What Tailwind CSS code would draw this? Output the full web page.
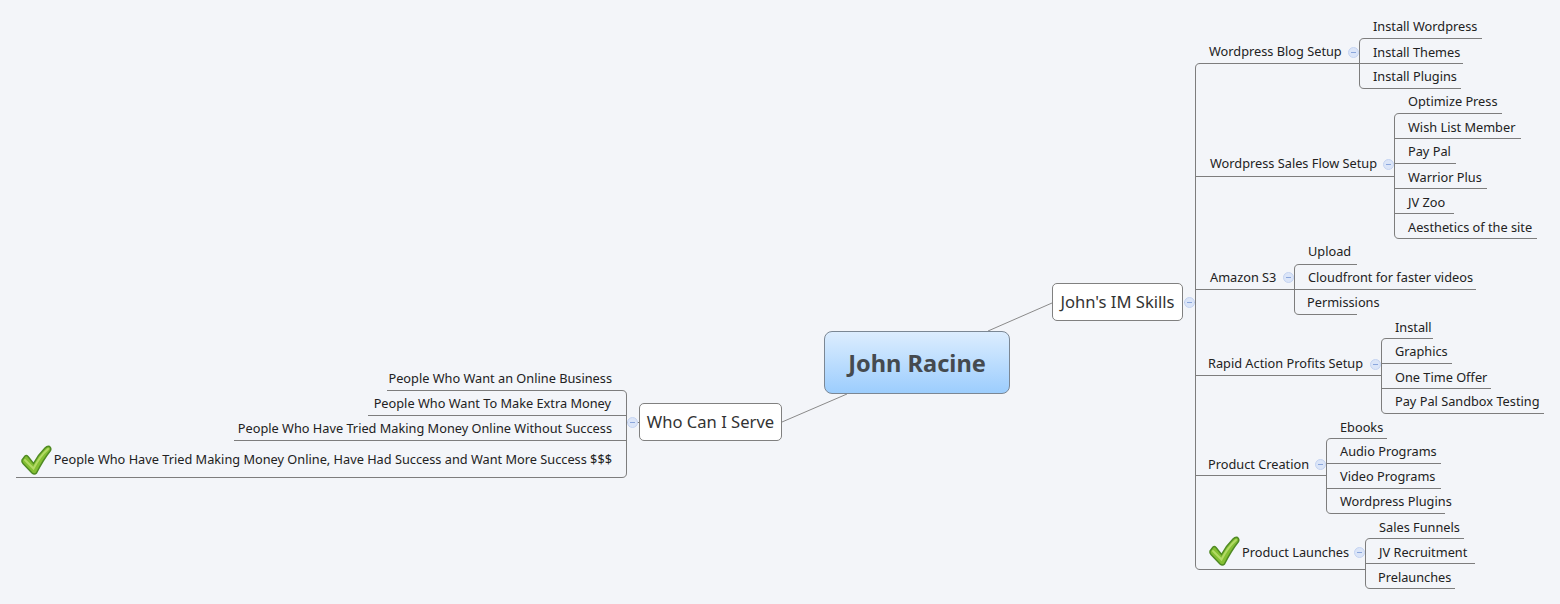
<!DOCTYPE html>
<html lang="en">
<head>
  <meta charset="UTF-8">
  <title>John Racine</title>
  <script src="https://cdn.jsdelivr.net/npm/@tailwindcss/browser@4"></script>
</head>
<body class="bg-[#f3f5f9] overflow-hidden">
  <div class="relative w-[1560px] h-[604px] font-['Noto_Sans',sans-serif] text-[12.75px] leading-5 text-[#222] whitespace-nowrap">

    <!-- connector lines -->
    <svg class="absolute left-0 top-0" width="1560" height="604" fill="none" stroke="#7d7d7d" stroke-width="1">
      <path stroke="#8a8a8a" d="M988 331L1052 303M847 394L782 422"/>
      <path d="M1199 63.5H1360M1195.500 176.5H1394.5M1195.500 289.5H1295M1195.500 375.5H1382M1195.500 475.5H1327M1199 569.5H1366"/>
      <path d="M1200 63.5Q1195.5 63.5 1195.5 68V565Q1195.5 569.5 1200 569.5"/>
      <path d="M1184 302.5H1195"/>
      <!-- blog setup -->
      <path d="M1482 38.5H1364Q1359.5 38.5 1359.5 43V84Q1359.5 88.5 1364 88.5H1461M1360 63.5H1463"/>
      <!-- sales flow -->
      <path d="M1502 113.5H1399Q1394.5 113.5 1394.5 118V234Q1394.5 238.5 1399 238.5H1537M1395 138.5H1521M1395 163.5H1456M1395 188.5H1487M1395 213.5H1454"/>
      <!-- amazon -->
      <path d="M1357 264.5H1299Q1294.5 264.5 1294.5 269V310Q1294.5 314.5 1299 314.5H1357M1295 289.5H1476"/>
      <!-- rapid action -->
      <path d="M1433 338.5H1386Q1381.5 338.5 1381.5 343V409Q1381.5 413.5 1386 413.5H1544M1382 363.5H1452M1382 388.5H1491"/>
      <!-- product creation -->
      <path d="M1387 438.5H1331Q1326.5 438.5 1326.5 443V509Q1326.5 513.5 1331 513.5H1445M1327 463.5H1441M1327 488.5H1441"/>
      <!-- product launches -->
      <path d="M1464 538.5H1370Q1365.5 538.5 1365.5 543V584Q1365.5 588.5 1370 588.5H1455M1366 563.5H1475"/>
      <!-- who can i serve -->
      <path d="M387 390.5H622Q626.5 390.5 626.5 395V473Q626.5 477.5 622 477.5H16M368 415.5H626M234 440.5H626"/>
      <path d="M627 422.5H639"/>
      <!-- collapse markers -->
      <g fill="#dbe5f8" stroke="#c5d4f2">
        <circle cx="1189.5" cy="302.5" r="5"/>
        <circle cx="632.5" cy="422.5" r="5"/>
        <circle cx="1353.5" cy="52.5" r="5"/>
        <circle cx="1388.5" cy="164.5" r="5"/>
        <circle cx="1288.5" cy="277.5" r="5"/>
        <circle cx="1375.5" cy="364.5" r="5"/>
        <circle cx="1320.5" cy="464.5" r="5"/>
        <circle cx="1359.5" cy="552.5" r="5"/>
      </g>
      <path stroke="#8aa6dc" d="M1187 302.5H1192M630 422.5H635M1351 52.5H1356M1386 164.5H1391M1286 277.5H1291M1373 364.5H1378M1318 464.5H1323M1357 552.5H1362"/>
    </svg>

    <!-- central topic -->
    <div class="absolute left-[824px] top-[331px] w-[186px] h-[63px] flex items-center justify-center rounded-[8px] border border-[#7b8794] bg-gradient-to-b from-[#dcedfe] to-[#9ccdfd] text-[23.6px] font-bold text-[#454a4f]">John Racine</div>

    <!-- main branches -->
    <div class="absolute left-[1052px] top-[283px] w-[131px] h-[38px] flex items-center justify-center rounded-[5px] border border-[#808080] bg-white text-[16.6px] text-[#333]">John's IM Skills</div>
    <div class="absolute left-[639px] top-[403px] w-[143px] h-[38px] flex items-center justify-center rounded-[5px] border border-[#808080] bg-white text-[16.6px] text-[#333]">Who Can I Serve</div>

    <!-- right side subtopics -->
    <span class="absolute left-[1209px] top-[41px]">Wordpress Blog Setup</span>
    <span class="absolute left-[1210px] top-[153px]">Wordpress Sales Flow Setup</span>
    <span class="absolute left-[1210px] top-[267px]">Amazon S3</span>
    <span class="absolute left-[1208px] top-[353px]">Rapid Action Profits Setup</span>
    <span class="absolute left-[1208px] top-[454px]">Product Creation</span>
    <span class="absolute left-[1242px] top-[542px]">Product Launches</span>

    <span class="absolute left-[1373px] top-[16px]">Install Wordpress</span>
    <span class="absolute left-[1373px] top-[42px]">Install Themes</span>
    <span class="absolute left-[1373px] top-[66px]">Install Plugins</span>

    <span class="absolute left-[1408px] top-[91px]">Optimize Press</span>
    <span class="absolute left-[1408px] top-[117px]">Wish List Member</span>
    <span class="absolute left-[1408px] top-[141px]">Pay Pal</span>
    <span class="absolute left-[1408px] top-[167px]">Warrior Plus</span>
    <span class="absolute left-[1408px] top-[192px]">JV Zoo</span>
    <span class="absolute left-[1408px] top-[217px]">Aesthetics of the site</span>

    <span class="absolute left-[1308px] top-[241px]">Upload</span>
    <span class="absolute left-[1308px] top-[267px]">Cloudfront for faster videos</span>
    <span class="absolute left-[1307px] top-[292px]">Permissions</span>

    <span class="absolute left-[1395px] top-[317px]">Install</span>
    <span class="absolute left-[1395px] top-[341px]">Graphics</span>
    <span class="absolute left-[1395px] top-[367px]">One Time Offer</span>
    <span class="absolute left-[1395px] top-[391px]">Pay Pal Sandbox Testing</span>

    <span class="absolute left-[1340px] top-[417px]">Ebooks</span>
    <span class="absolute left-[1340px] top-[441px]">Audio Programs</span>
    <span class="absolute left-[1340px] top-[466px]">Video Programs</span>
    <span class="absolute left-[1340px] top-[491px]">Wordpress Plugins</span>

    <span class="absolute left-[1379px] top-[517px]">Sales Funnels</span>
    <span class="absolute left-[1379px] top-[542px]">JV Recruitment</span>
    <span class="absolute left-[1378px] top-[567px]">Prelaunches</span>

    <!-- left side subtopics -->
    <span class="absolute right-[948px] top-[368px]">People Who Want an Online Business</span>
    <span class="absolute right-[949px] top-[393px]">People Who Want To Make Extra Money</span>
    <span class="absolute right-[948px] top-[418px]">People Who Have Tried Making Money Online Without Success</span>
    <span class="absolute right-[948px] top-[449px]">People Who Have Tried Making Money Online, Have Had Success and Want More Success $$$</span>

    <!-- check marks -->
    <svg class="absolute left-[20px] top-[444px]" width="33" height="33" viewBox="0 0 33 33">
      <path d="M2 16Q1.500 18 3 19.500L12 29Q14.500 31 16.500 29Q23 16 30.500 6.500Q31.500 4 29.500 2.500Q27.500 1.500 25 4Q18 11 13.500 19.500L8 12.500Q6.500 11 5 12Z" fill="#84bf33" stroke="#4f8a23" stroke-width="1.500"/>
      <path d="M5 16L13.500 24.500Q20 12 28 5" fill="none" stroke="#b3da66" stroke-width="2" stroke-linecap="round"/>
    </svg>
    <svg class="absolute left-[1208px] top-[535px]" width="33" height="33" viewBox="0 0 33 33">
      <path d="M2 16Q1.500 18 3 19.500L12 29Q14.500 31 16.500 29Q23 16 30.500 6.500Q31.500 4 29.500 2.500Q27.500 1.500 25 4Q18 11 13.500 19.500L8 12.500Q6.500 11 5 12Z" fill="#84bf33" stroke="#4f8a23" stroke-width="1.500"/>
      <path d="M5 16L13.500 24.500Q20 12 28 5" fill="none" stroke="#b3da66" stroke-width="2" stroke-linecap="round"/>
    </svg>
  </div>
</body>
</html>
